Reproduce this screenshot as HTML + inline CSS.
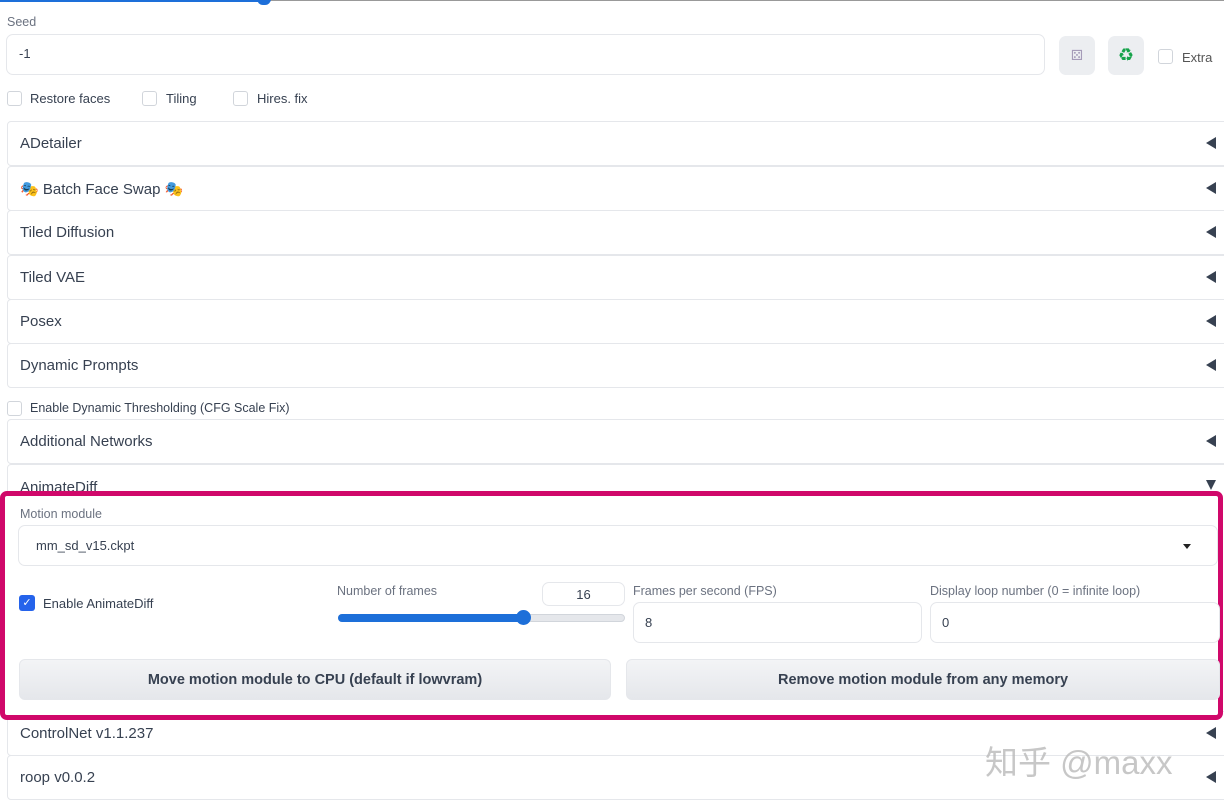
<!DOCTYPE html>
<html><head><meta charset="utf-8"><style>
*{box-sizing:border-box;margin:0;padding:0}
body{width:1224px;height:805px;overflow:hidden;background:#fff;font-family:"Liberation Sans",sans-serif;color:#374151;position:relative}
.a{position:absolute}
.row{position:absolute;left:7px;width:1230px;height:45px;border:1px solid #e5e7eb;border-radius:4px;background:#fff}
.row span{position:absolute;left:12px;top:13px;font-size:15px;color:#374151}
.tri{position:absolute;right:20px;top:15px;width:0;height:0;border-top:6px solid transparent;border-bottom:6px solid transparent;border-right:10px solid #374151}
.cb{position:absolute;width:15px;height:15px;border:1px solid #d1d5db;border-radius:3px;background:#fff}
.lbl{position:absolute;font-size:13px;color:#374151}
.small{position:absolute;font-size:12.5px;color:#6b7280}
.inp{position:absolute;border:1px solid #e5e7eb;border-radius:7px;background:#fff;font-size:13px;color:#374151}
.btn{position:absolute;height:41px;border-radius:6px;background:linear-gradient(#f3f4f6,#e5e7eb);border:1px solid #e5e7eb;font-size:14.5px;font-weight:bold;color:#374151;text-align:center;line-height:40px}
</style></head><body>
<div class="a" style="left:0;top:0;width:264px;height:2px;background:#1d6fd9"></div>
<div class="a" style="left:264px;top:0;width:960px;height:1px;background:#999"></div>
<div class="a" style="left:257px;top:-7px;width:14px;height:12px;border-radius:7px;background:#1d6fd9"></div>
<div class="small" style="left:7px;top:15px">Seed</div>
<div class="inp" style="left:6px;top:34px;width:1039px;height:41px"><span style="position:absolute;left:12px;top:11px">-1</span></div>
<div class="a" style="left:1059px;top:36px;width:36px;height:39px;border-radius:7px;background:#eceef1;text-align:center;line-height:39px;font-size:14px;color:#a59bb8">⚄</div>
<div class="a" style="left:1108px;top:36px;width:36px;height:39px;border-radius:7px;background:#eceef1;text-align:center;line-height:39px;font-size:18px;color:#16a34a">♻</div>
<div class="cb" style="left:1158px;top:49px"></div><div class="lbl" style="left:1182px;top:50px;color:#555">Extra</div>
<div class="cb" style="left:7px;top:91px"></div><div class="lbl" style="left:30px;top:91px">Restore faces</div>
<div class="cb" style="left:142px;top:91px"></div><div class="lbl" style="left:166px;top:91px">Tiling</div>
<div class="cb" style="left:233px;top:91px"></div><div class="lbl" style="left:257px;top:91px">Hires. fix</div>
<div class="row" style="top:121px"><span>ADetailer</span><i class="tri"></i></div>
<div class="row" style="top:166px"><span><b style="font-weight:normal;color:#3b9fd8">🎭</b> Batch Face Swap <b style="font-weight:normal;color:#3b9fd8">🎭</b></span><i class="tri"></i></div>
<div class="row" style="top:210px"><span>Tiled Diffusion</span><i class="tri"></i></div>
<div class="row" style="top:255px"><span>Tiled VAE</span><i class="tri"></i></div>
<div class="row" style="top:299px"><span>Posex</span><i class="tri"></i></div>
<div class="row" style="top:343px"><span>Dynamic Prompts</span><i class="tri"></i></div>
<div class="cb" style="left:7px;top:401px"></div><div class="lbl" style="left:30px;top:401px;font-size:12.5px">Enable Dynamic Thresholding (CFG Scale Fix)</div>
<div class="row" style="top:419px"><span>Additional Networks</span><i class="tri"></i></div>
<div class="row" style="top:464px;height:260px"><span style="top:14px">AnimateDiff</span><i class="a" style="right:20px;top:15px;border-left:5px solid transparent;border-right:5px solid transparent;border-top:10px solid #374151;width:0;height:0"></i></div>
<div class="row" style="top:711px"><span>ControlNet v1.1.237</span><i class="tri"></i></div>
<div class="row" style="top:755px"><span>roop v0.0.2</span><i class="tri"></i></div>
<div class="a" style="left:0;top:491px;width:1223px;height:229px;border:5px solid #d0086a;border-radius:7px;background:#fff"></div>
<div class="small" style="left:20px;top:507px">Motion module</div>
<div class="inp" style="left:18px;top:525px;width:1200px;height:41px"><span style="position:absolute;left:17px;top:12px">mm_sd_v15.ckpt</span><i class="a" style="right:26px;top:18px;border-left:4px solid transparent;border-right:4px solid transparent;border-top:5px solid #222"></i></div>
<div class="a" style="left:19px;top:595px;width:16px;height:16px;border-radius:3px;background:#2563eb;color:#fff;font-size:11px;text-align:center;line-height:16px">✓</div>
<div class="lbl" style="left:43px;top:596px">Enable AnimateDiff</div>
<div class="small" style="left:337px;top:584px">Number of frames</div>
<div class="inp" style="left:542px;top:582px;width:83px;height:24px;text-align:center;line-height:23px">16</div>
<div class="a" style="left:338px;top:614px;width:287px;height:8px;border-radius:4px;background:#e5e7eb;border:1px solid #d1d5db"></div>
<div class="a" style="left:338px;top:614px;width:186px;height:8px;border-radius:4px;background:#1d6fd9"></div>
<div class="a" style="left:516px;top:610px;width:15px;height:15px;border-radius:8px;background:#1d6fd9"></div>
<div class="small" style="left:633px;top:584px">Frames per second (FPS)</div>
<div class="inp" style="left:633px;top:602px;width:289px;height:41px"><span style="position:absolute;left:11px;top:12px">8</span></div>
<div class="small" style="left:930px;top:584px">Display loop number (0 = infinite loop)</div>
<div class="inp" style="left:930px;top:602px;width:290px;height:41px"><span style="position:absolute;left:11px;top:12px">0</span></div>
<div class="btn" style="left:19px;top:659px;width:592px">Move motion module to CPU (default if lowvram)</div>
<div class="btn" style="left:626px;top:659px;width:594px">Remove motion module from any memory</div>
<div class="a" style="left:985px;top:736px;font-size:33px;color:rgba(185,185,185,0.8);font-family:'Liberation Sans','Noto Sans CJK SC',sans-serif">知乎 @maxx</div>
</body></html>
